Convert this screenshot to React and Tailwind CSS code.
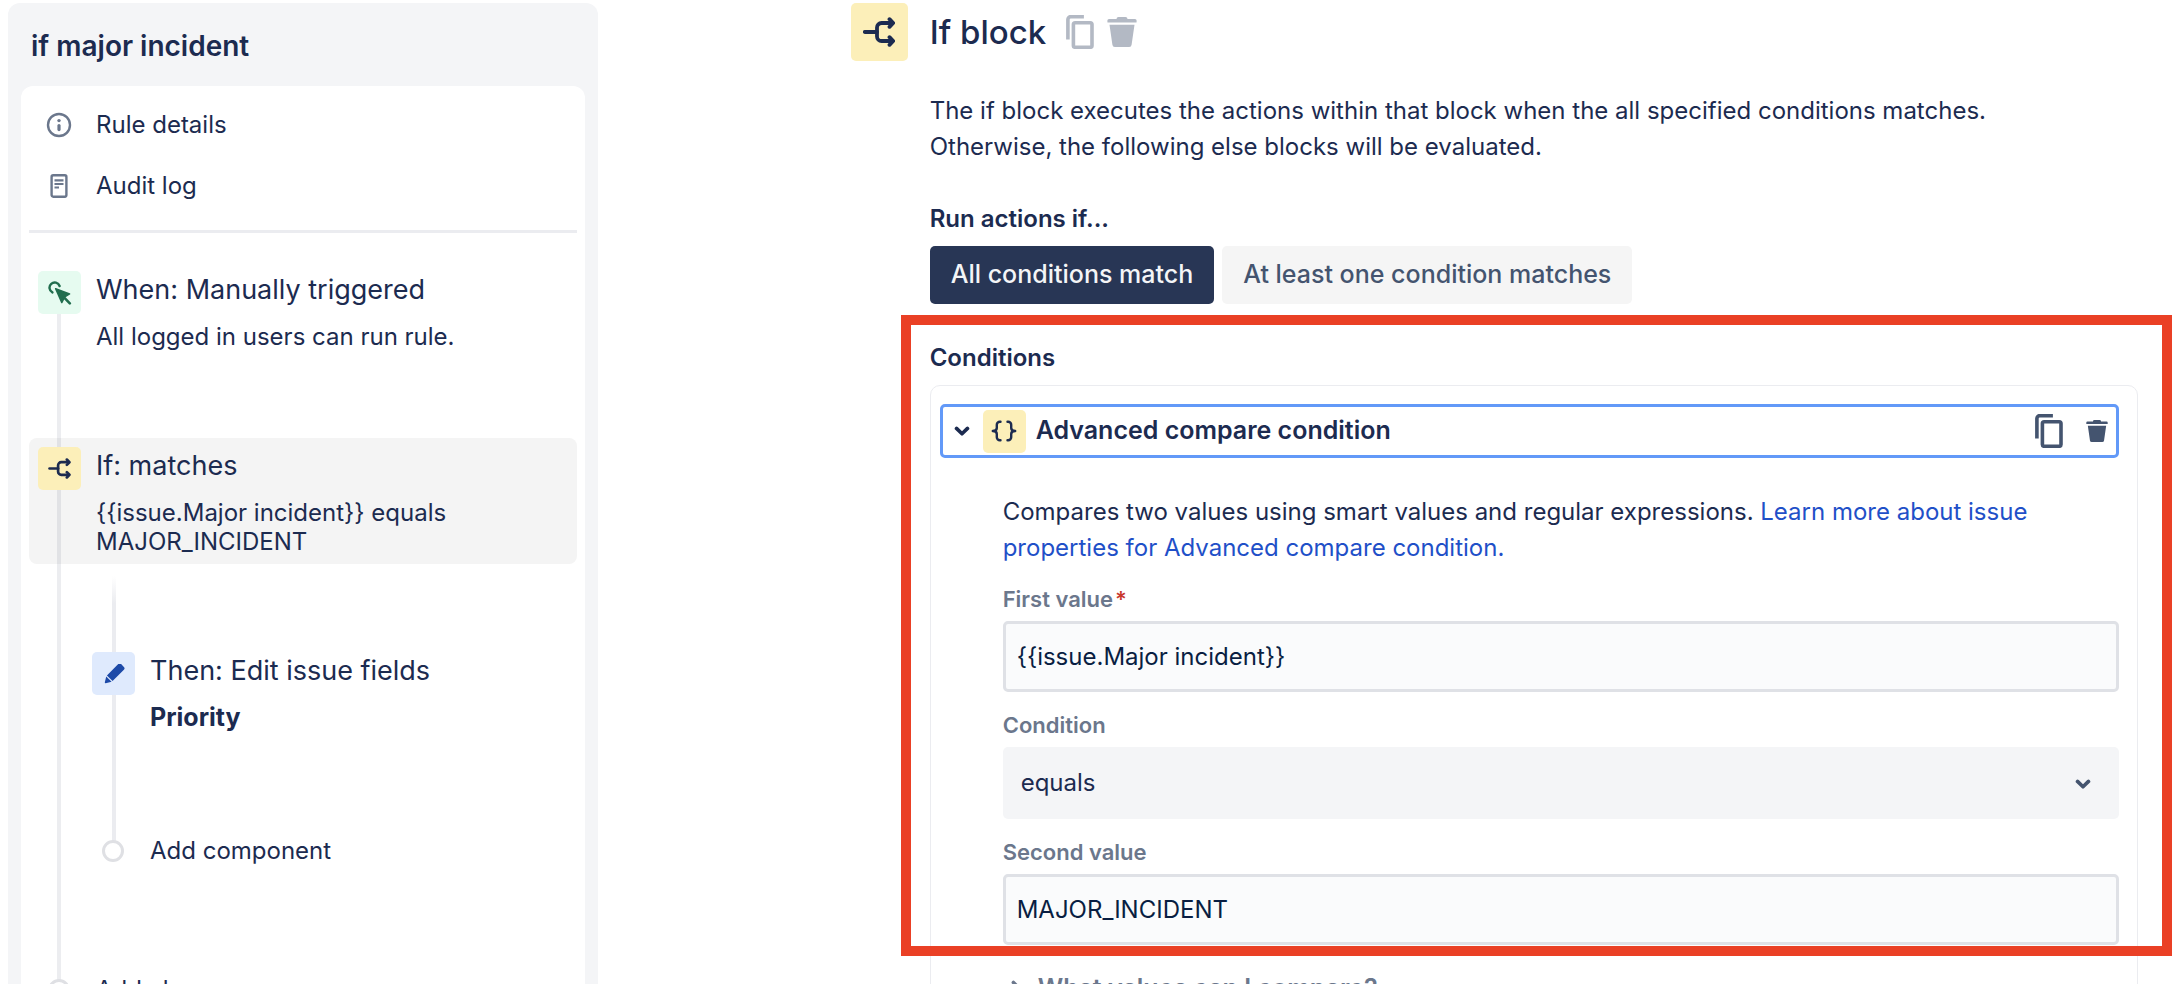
import React, { useState } from 'react';

const DESCRIPTION =
  'The if block executes the actions within that block when the all specified conditions matches. Otherwise, the following else blocks will be evaluated.';

function BranchIcon({ className }) {
  return (
    <svg viewBox="0 0 32 30" className={className} fill="none" stroke="currentColor" strokeWidth="3.8" strokeLinecap="round" strokeLinejoin="round" aria-hidden="true">
      <path d="M1.8 15H14" />
      <path d="M28 6H18.5a4.5 4.5 0 0 0-4.5 4.5v9a4.5 4.5 0 0 0 4.5 4.5H28" />
      <path d="M26.5 2.2 30.2 6l-3.7 3.8M26.5 20.2l3.7 3.8-3.7 3.8" />
    </svg>
  );
}

function ManualIcon() {
  return (
    <svg viewBox="0 0 24 24" className="w-6 h-6" fill="none" stroke="currentColor" aria-hidden="true">
      <path d="M4.4 11.4A5.2 5.2 0 1 1 11.6 5" strokeWidth="2.4" strokeLinecap="round" />
      <path d="M7.6 7.6 21.6 13l-4.8 3-3 5.6z" fill="currentColor" strokeWidth="1.4" strokeLinejoin="round" />
      <path d="m16 16.4 5.8 6" strokeWidth="2.6" strokeLinecap="round" />
    </svg>
  );
}

function PencilIcon() {
  return (
    <svg viewBox="0 0 22 20" className="w-[22px] h-5" fill="currentColor" aria-hidden="true">
      <g transform="translate(11 10) rotate(45)">
        <path d="M-4-10a2 2 0 0 1 2-2h4a2 2 0 0 1 2 2V6h-8z" />
        <path d="M-3.8 7.2h7.6L.6 12.4a.8.8 0 0 1-1.2 0z" />
      </g>
    </svg>
  );
}

function CopyIcon() {
  return (
    <svg viewBox="0 0 28 34" className="w-7 h-[34px]" fill="none" stroke="currentColor" strokeWidth="3.6" aria-hidden="true">
      <path d="M1.9 24.5V4.6a3 3 0 0 1 3-3h13" />
      <rect x="7.4" y="7.7" width="18.6" height="24.6" rx="1.8" />
    </svg>
  );
}

function TrashIcon({ className }) {
  return (
    <svg viewBox="0 0 30 30" className={className} fill="currentColor" aria-hidden="true">
      <path d="M9.5 2a2 2 0 0 1 2-2h7a2 2 0 0 1 2 2H28a1.6 1.6 0 0 1 1.6 1.6V5a.6.6 0 0 1-.6.6H1a.6.6 0 0 1-.6-.6V3.6A1.6 1.6 0 0 1 2 2z" />
      <path d="M2.5 7.8h25l-2.9 20a2.5 2.5 0 0 1-2.5 2.2H7.9a2.5 2.5 0 0 1-2.5-2.2z" />
    </svg>
  );
}

function BracesIcon() {
  return (
    <svg viewBox="0 0 26 22" className="w-[26px] h-[22px]" fill="none" stroke="currentColor" strokeWidth="2.4" strokeLinecap="round" strokeLinejoin="round" aria-hidden="true">
      <path d="M9.5 1.8h-.7a3 3 0 0 0-3 3V8c0 2-1 3-4 3 3 0 4 1 4 3v3.2a3 3 0 0 0 3 3h.7" />
      <path d="M16.5 1.8h.7a3 3 0 0 1 3 3V8c0 2 1 3 4 3-3 0-4 1-4 3v3.2a3 3 0 0 1-3 3h-.7" />
    </svg>
  );
}

function ChevronIcon({ className }) {
  return (
    <svg viewBox="0 0 16 10" className={className} fill="none" stroke="currentColor" strokeWidth="3.6" strokeLinecap="round" strokeLinejoin="round" aria-hidden="true">
      <path d="M2.5 2.4 8 7.8l5.5-5.4" />
    </svg>
  );
}

function InfoIcon() {
  return (
    <svg viewBox="0 0 26 26" className="w-[26px] h-[26px]" fill="none" stroke="currentColor" aria-hidden="true">
      <circle cx="13" cy="13" r="11" strokeWidth="2.4" />
      <path d="M13 13.6v4" strokeWidth="3.2" strokeLinecap="round" />
      <circle cx="13" cy="8.6" r="1.7" fill="currentColor" stroke="none" />
    </svg>
  );
}

function LogIcon() {
  return (
    <svg viewBox="0 0 18 24" className="w-[18px] h-6" fill="none" stroke="currentColor" strokeWidth="2.4" aria-hidden="true">
      <rect x="1.6" y="1.3" width="14.8" height="21.4" rx="1.6" />
      <path d="M4.5 6.3h9M4.5 10h9M4.500 13.500h4.500" strokeWidth="2.2" />
    </svg>
  );
}

function NavItem({ icon, label }) {
  return (
    <a href="#" className="flex items-center h-[61px] pl-2">
      <span className="w-11 mr-[15px] flex justify-center text-[#6b778c]">{icon}</span>
      {label}
    </a>
  );
}

function Step({ icon, tint, title, selected, children }) {
  return (
    <div className={`flex gap-[15px] pt-[9px] pb-2 px-[9px] rounded-lg ${selected ? 'bg-[#f4f4f4]' : ''}`}>
      <span className={`relative z-10 shrink-0 w-[43px] h-[43px] rounded-[5px] flex items-center justify-center ${tint}`}>
        {icon}
      </span>
      <div>
        <h3 className="text-[27px] leading-[38px] font-normal">{title}</h3>
        <p className="mt-[13px] leading-[29px]">{children}</p>
      </div>
    </div>
  );
}

function AddStep({ label }) {
  return (
    <button type="button" className="flex items-center gap-[26px] pl-[19px] h-8">
      <span className="relative z-10 w-[22px] h-[22px] rounded-full border-[3px] border-[#dfe0e4] bg-white" />
      {label}
    </button>
  );
}

function Sidebar() {
  return (
    <aside className="w-[27%] shrink-0 ml-2 mt-[3px] px-[13px] pt-[25px] rounded-t-xl bg-[#f4f5f7] flex flex-col">
      <h2 className="pl-[10px] text-[28px] leading-9 font-semibold">if major incident</h2>
      <div className="mt-[22px] pt-2 px-2 rounded-t-xl bg-white grow">
        <nav>
          <NavItem icon={<InfoIcon />} label="Rule details" />
          <NavItem icon={<LogIcon />} label="Audit log" />
        </nav>
        <hr className="mt-[14px] border-0 h-[3px] bg-[#ebecf0]" />

        <div className="relative mt-[29px]">
          {/* Main branch connector */}
          <div className="absolute left-[28px] top-[30px] bottom-4 w-1 bg-[#091e42]/8" />
          <Step icon={<ManualIcon />} tint="bg-[#e6fbf0] text-[#216e4e]" title="When: Manually triggered">
            All logged in users can run rule.
          </Step>
          <div className="mt-[79px]">
            <Step selected icon={<BranchIcon className="w-[23px] h-[21px]" />} tint="bg-[#fcefb9]" title="If: matches">
              {'{{issue.Major incident}} equals MAJOR_INCIDENT'}
            </Step>
          </div>

          {/* Nested branch */}
          <div className="relative ml-[54px] pt-[79px]">
            <div className="absolute left-[29px] top-3 bottom-4 w-1 bg-linear-to-b from-transparent to-[#ebecf0] to-10%" />
            <Step icon={<PencilIcon />} tint="bg-[#dfeafd] text-[#1d4aa8]" title="Then: Edit issue fields">
              <strong className="font-bold text-[25px]">Priority</strong>
            </Step>
            <div className="mt-[95px]">
              <AddStep label="Add component" />
            </div>
          </div>
          <div className="mt-[107px]">
            <AddStep label="Add else" />
          </div>
        </div>
      </div>
    </aside>
  );
}

function Field({ id, label, required, children }) {
  return (
    <div className="mt-[19px]">
      <label htmlFor={id} className="block mb-2 text-[22px] leading-7 font-semibold text-[#6b778c]">
        {label}
        {required && <span className="ml-0.5 text-[#c9372c]">*</span>}
      </label>
      {children}
    </div>
  );
}

function TextField({ id, value, onChange }) {
  return (
    <input
      id={id}
      type="text"
      value={value}
      onChange={(e) => onChange(e.target.value)}
      className="block w-full h-[71px] px-[11px] rounded-[5px] border-[3px] border-[#dfe1e6] bg-[#fafbfc] text-[#091e42] outline-none"
    />
  );
}

function ConditionCard() {
  const [first, setFirst] = useState('{{issue.Major incident}}');
  const [operator, setOperator] = useState('equals');
  const [second, setSecond] = useState('MAJOR_INCIDENT');

  return (
    <div className="mt-[11px] pt-[18px] pl-[9px] pr-[18px] pb-10 border border-[#ebecf0] rounded-[10px]">
      <div className="flex items-center h-[54px] pl-[11px] pr-2 rounded-[5px] border-[3px] border-[#6299f8]">
        <button type="button" aria-expanded="true" className="flex items-center grow text-[25px] font-semibold text-left">
          <ChevronIcon className="w-4 h-[10px] mr-[13px]" />
          <span className="w-[43px] h-[43px] mr-[10px] rounded-[5px] bg-[#fcefb9] flex items-center justify-center">
            <BracesIcon />
          </span>
          Advanced compare condition
        </button>
        <button type="button" aria-label="Duplicate condition" className="mr-[23px] text-[#44546f]">
          <CopyIcon />
        </button>
        <button type="button" aria-label="Delete condition" className="text-[#44546f]">
          <TrashIcon className="w-[22px] h-[22px]" />
        </button>
      </div>

      <div className="pl-[63px] pt-9">
        <p className="leading-9">
          Compares two values using smart values and regular expressions.{' '}
          <a href="#" className="text-[#1f50c8]">Learn more about issue properties for Advanced compare condition.</a>
        </p>
        <Field id="first-value" label="First value" required>
          <TextField id="first-value" value={first} onChange={setFirst} />
        </Field>
        <Field id="condition" label="Condition">
          <div className="relative">
            <select
              id="condition"
              value={operator}
              onChange={(e) => setOperator(e.target.value)}
              className="block w-full h-[72px] px-[18px] rounded-[5px] bg-[#f4f5f7] appearance-none outline-none"
            >
              <option>equals</option>
              <option>does not equal</option>
            </select>
            <ChevronIcon className="absolute right-7 top-8 w-4 h-[10px] text-[#44546f] pointer-events-none" />
          </div>
        </Field>
        <Field id="second-value" label="Second value">
          <TextField id="second-value" value={second} onChange={setSecond} />
        </Field>
        <button type="button" className="mt-[27px] flex items-center gap-[14px] pl-[5px] text-[25px] leading-8 font-semibold text-[#6b778c]">
          <ChevronIcon className="w-4 h-[10px] -rotate-90" />
          What values can I compare?
        </button>
      </div>
    </div>
  );
}

export default function App() {
  const [mode, setMode] = useState('all');
  const active = 'bg-[#283655] text-[#f4f5f7]';
  const idle = 'bg-[#f5f5f5] text-[#44546f]';

  return (
    <div className="h-screen overflow-hidden flex bg-white font-['Inter','Liberation_Sans',sans-serif] text-[24px] text-[#1c2b50]">
      <Sidebar />
      <main className="grow min-w-0 pl-[253px] pr-[46px] pt-[3px]">
        <header className="flex items-center">
          <span className="w-[57px] h-[58px] mr-[22px] rounded-[5px] bg-[#fcefb9] flex items-center justify-center">
            <BranchIcon className="w-8 h-[30px]" />
          </span>
          <h1 className="text-[33px] leading-10 font-medium mr-[20px]">If block</h1>
          <button type="button" aria-label="Duplicate block" className="mr-[13px] text-[#b3b9c4]">
            <CopyIcon />
          </button>
          <button type="button" aria-label="Delete block" className="text-[#b3b9c4]">
            <TrashIcon className="w-[30px] h-[30px]" />
          </button>
        </header>

        <div className="pl-[79px]">
          <p className="mt-8 max-w-[1100px] leading-9">{DESCRIPTION}</p>

          <h2 className="mt-[38px] leading-8 font-semibold">Run actions if...</h2>
          <div className="mt-[11px] flex gap-2 text-[25px] font-medium">
            <button type="button" onClick={() => setMode('all')} className={`h-[58px] px-[21px] rounded-[5px] ${mode === 'all' ? active : idle}`}>
              All conditions match
            </button>
            <button type="button" onClick={() => setMode('any')} className={`h-[58px] px-[21px] rounded-[5px] ${mode === 'any' ? active : idle}`}>
              At least one condition matches
            </button>
          </div>

          <section className="relative mt-[38px]">
            <h2 className="leading-8 font-semibold">Conditions</h2>
            <ConditionCard />
            {/* Highlight frame over the conditions */}
            <div className="absolute -left-[29px] -right-[34px] -top-[27px] h-[641px] border-[10px] border-[#ea4025] pointer-events-none" />
          </section>
        </div>
      </main>
    </div>
  );
}
